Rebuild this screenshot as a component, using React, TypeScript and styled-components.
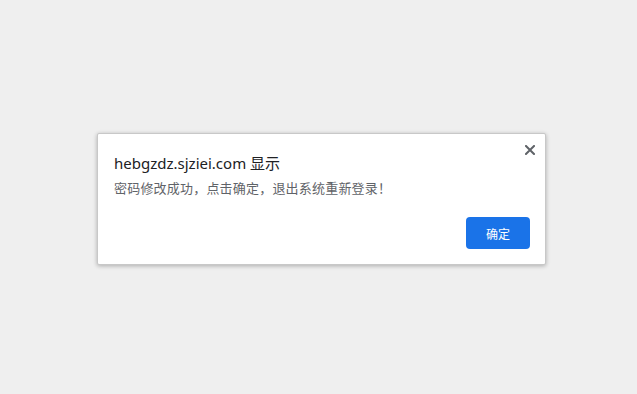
import React from "react";
import styled, { createGlobalStyle } from "styled-components";

const GlobalStyle = createGlobalStyle`
  html, body {
    margin: 0;
    padding: 0;
    background: #efefef;
  }
  body {
    font-family: "Noto Sans", "Noto Sans CJK SC", sans-serif;
  }
`;

const Page = styled.div`
  width: 637px;
  height: 394px;
  box-sizing: border-box;
  padding: 133px 0 0 97px;
`;

const Dialog = styled.div`
  position: relative;
  box-sizing: border-box;
  width: 449px;
  height: 132px;
  background: #fff;
  border: 1px solid #c8c8c8;
  border-radius: 2px;
  box-shadow: 0 1px 4px rgba(0, 0, 0, 0.28);
  padding: 18px 15px 15px 16px;
  display: flex;
  flex-direction: column;
`;

const Title = styled.div`
  font-size: 15px;
  line-height: 22px;
  color: #202124;
`;

const Message = styled.div`
  margin-top: 5px;
  font-size: 13px;
  line-height: 18px;
  letter-spacing: 0.2px;
  color: #5f6368;
  font-family: "Noto Sans CJK SC", sans-serif;
`;

const Actions = styled.div`
  margin-top: auto;
  display: flex;
  justify-content: flex-end;
`;

const OkButton = styled.button`
  width: 64px;
  height: 32px;
  border: none;
  border-radius: 4px;
  background: #1a73e8;
  color: #fff;
  font-size: 12px;
  font-family: "Noto Sans CJK SC", sans-serif;
  cursor: pointer;
`;

const Close = styled.button`
  position: absolute;
  top: 6px;
  right: 5px;
  width: 20px;
  height: 20px;
  padding: 0;
  border: none;
  background: transparent;
  display: flex;
  align-items: center;
  justify-content: center;
  cursor: pointer;
`;

export default function App() {
  return (
    <>
      <GlobalStyle />
      <Page>
        <Dialog>
          <Close aria-label="关闭">
            <svg width="10" height="10" viewBox="0 0 10 10">
              <path
                d="M1 1 L9 9 M9 1 L1 9"
                stroke="#5f6368"
                strokeWidth="2"
                strokeLinecap="square"
              />
            </svg>
          </Close>
          <Title>hebgzdz.sjziei.com 显示</Title>
          <Message>密码修改成功，点击确定，退出系统重新登录！</Message>
          <Actions>
            <OkButton>确定</OkButton>
          </Actions>
        </Dialog>
      </Page>
    </>
  );
}
